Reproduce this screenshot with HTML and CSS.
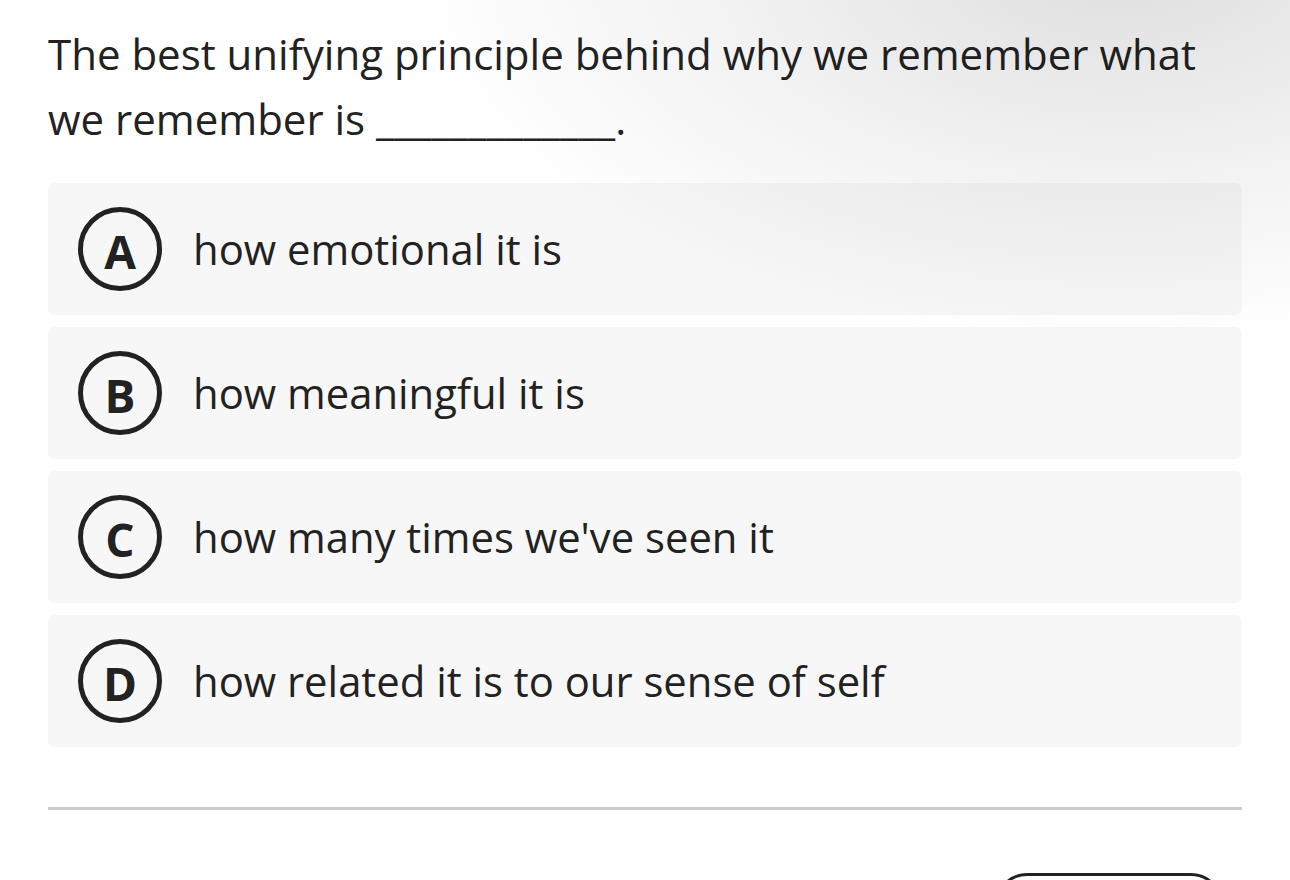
FILE: index.html
```html
<!DOCTYPE html>
<html lang="en">
<head>
<meta charset="utf-8">
<title>Question</title>
<link rel="stylesheet" href="styles.css">
</head>
<body>
<div class="page">
  <div class="shade"></div>
  <main class="quiz">
    <p class="question">The best unifying principle behind why we remember what we remember is <span class="blank">_____________</span>.</p>
    <ul class="options">
      <li class="option"><span class="letter">A</span><span class="label">how emotional it is</span></li>
      <li class="option"><span class="letter">B</span><span class="label">how meaningful it is</span></li>
      <li class="option"><span class="letter">C</span><span class="label">how many times we've seen it</span></li>
      <li class="option"><span class="letter">D</span><span class="label">how related it is to our sense of self</span></li>
    </ul>
    <hr class="divider">
    <div class="actions"><button class="btn">Submit</button></div>
  </main>
</div>
</body>
</html>
```
FILE: styles.css
```css
html, body {
  margin: 0;
  padding: 0;
  background: #ffffff;
  height: 100%;
  overflow: hidden;
}
.page {
  position: relative;
  width: 1290px;
  height: 880px;
  overflow: hidden;
  font-family: "Open Sans", "Noto Sans", sans-serif;
  color: #222222;
}
.shade {
  position: absolute;
  inset: 0;
  pointer-events: none;
  z-index: 2;
  background: radial-gradient(ellipse 720px 390px at 1120px -40px, rgba(0,0,0,0.13), rgba(0,0,0,0.05) 55%, rgba(0,0,0,0) 100%);
}
.quiz {
  padding: 21px 48px 0 48px;
}
.question {
  margin: 0;
  font-size: 42px;
  line-height: 65px;
  font-weight: 400;
}
.options {
  list-style: none;
  margin: 32px 0 0 0;
  padding: 0;
  display: flex;
  flex-direction: column;
  gap: 12px;
}
.option {
  display: flex;
  align-items: center;
  height: 132px;
  background: #f7f7f7;
  border-radius: 7px;
  padding-left: 30px;
  box-sizing: border-box;
}
.letter {
  width: 84px;
  height: 84px;
  box-sizing: border-box;
  border: 5px solid #222;
  border-radius: 50%;
  display: flex;
  align-items: center;
  justify-content: center;
  font-weight: 700;
  font-size: 46px;
  line-height: 1;
  flex: none;
  padding-top: 4px;
}
.label {
  margin-left: 31px;
  font-size: 41.8px;
  line-height: 1;
}
.divider {
  margin: 60px 0 0 0;
  border: 0;
  height: 3px;
  background: #cccccc;
}
.actions {
  display: flex;
  justify-content: flex-end;
  padding-right: 19px;
  margin-top: 63px;
}
.btn {
  width: 228px;
  height: 64px;
  border: 3px solid #222;
  border-radius: 32px;
  background: #fff;
  font-family: "Open Sans", sans-serif;
  font-size: 28px;
  font-weight: 700;
  color: #222;
}
```
